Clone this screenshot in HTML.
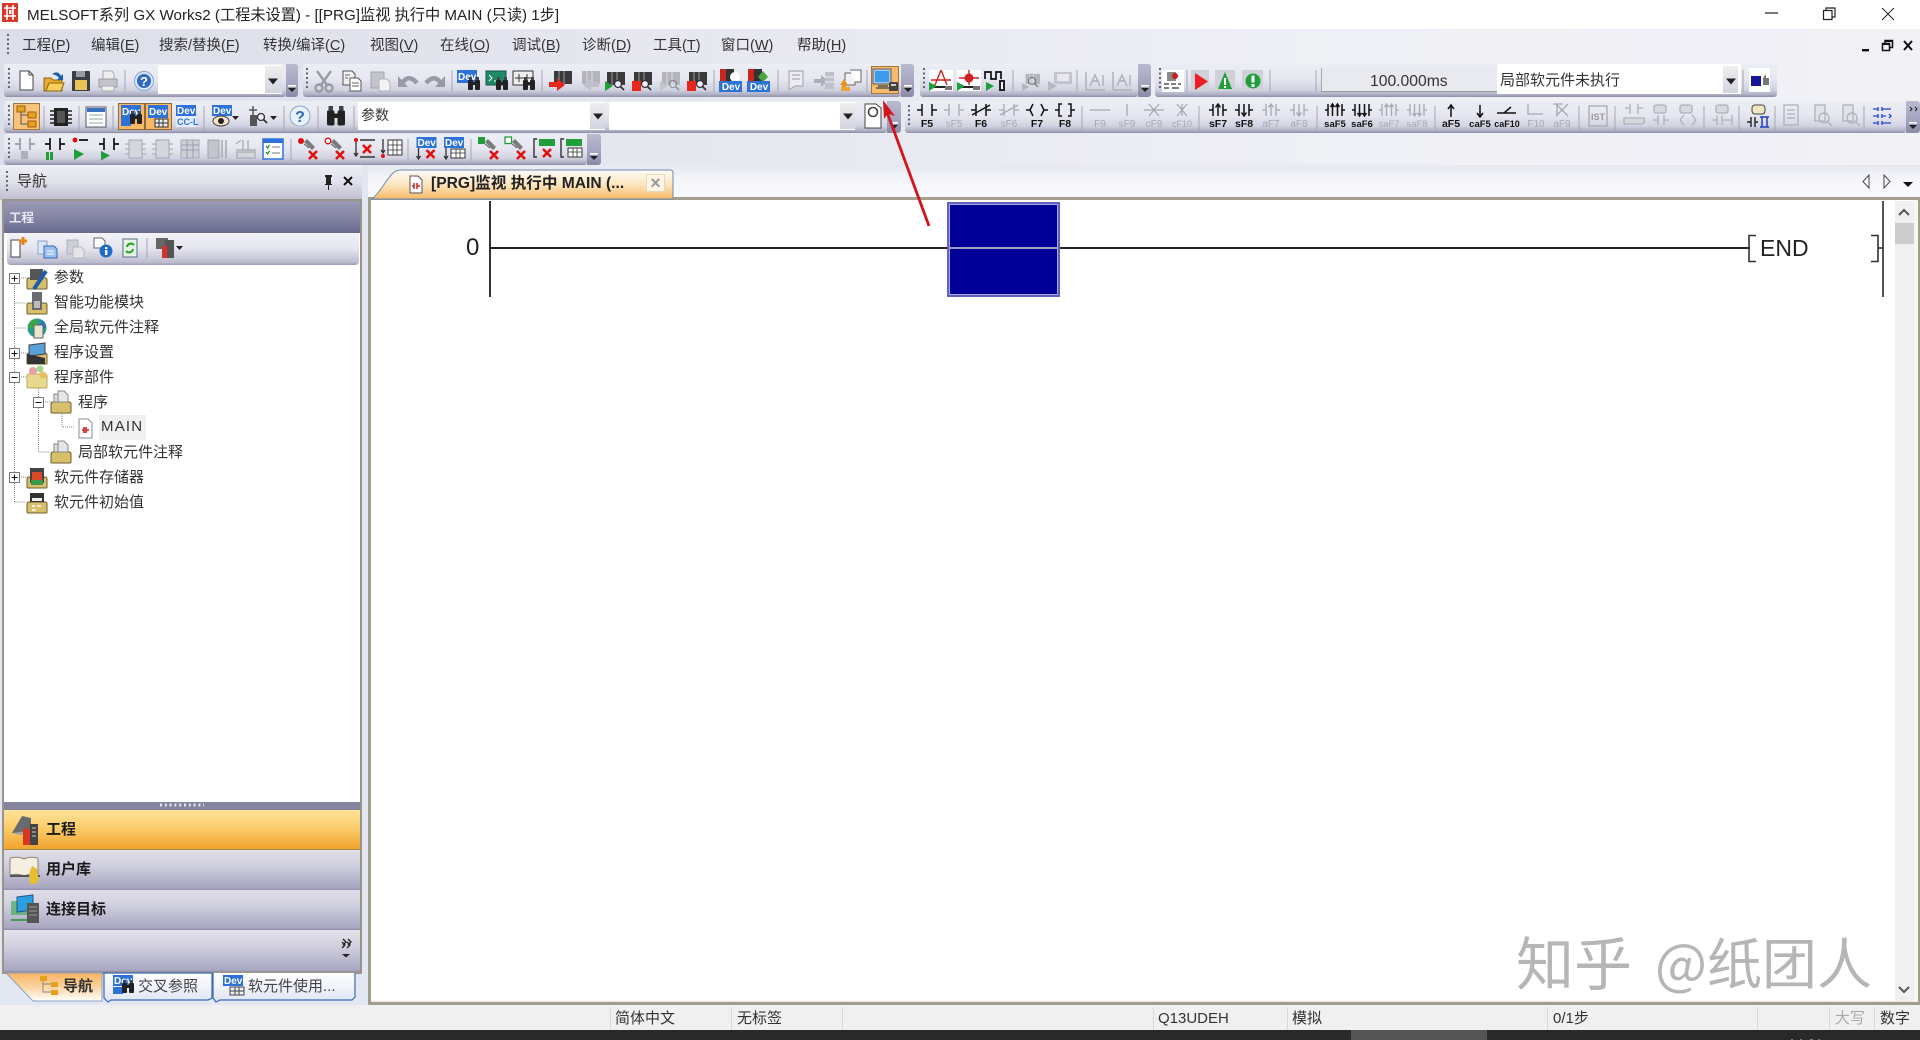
<!DOCTYPE html>
<html lang="zh"><head><meta charset="utf-8"><title>MELSOFT GX Works2</title>
<style>
*{box-sizing:border-box}
html,body{margin:0;padding:0;width:1920px;height:1040px;overflow:hidden;background:#fff}
body{position:relative;font-family:"Liberation Sans","Noto Sans CJK SC",sans-serif;color:#222}
.a{position:absolute}
.t{position:absolute;white-space:nowrap;line-height:20px;height:20px}
.m{font-size:14.5px;top:36px;color:#333}
.m u{text-decoration:underline}
.tb{position:absolute;border-radius:3px;background:linear-gradient(#eceef5,#e6e7f0 45%,#d2d3e2 78%,#aeaec4 93%,#8c8ca6)}
.gp{position:absolute;border-radius:0 3px 3px 0;background:linear-gradient(#b9b9cf,#a4a4c0 60%,#8a8aa6)}
.tree{font-size:15px;color:#333}
.st{font-size:15px;top:1009px;color:#333}
.ss{position:absolute;top:1007px;width:1px;height:23px;background:#d8d8d8}
.bt{font-size:15px;font-weight:bold;left:46px;color:#1a1a1a}
svg text{font-family:"Liberation Sans","Noto Sans CJK SC",sans-serif}
</style></head><body>

<!-- title bar -->
<div class="a" style="left:0;top:0;width:1920px;height:29px;background:#fff"></div>
<div class="t" style="left:27px;top:6px;font-size:15.2px;color:#222">MELSOFT系列 GX Works2 (工程未设置) - [[PRG]监视 执行中 MAIN (只读) 1步]</div>

<!-- chrome bg -->
<div class="a" style="left:0;top:29px;width:1920px;height:141px;background:linear-gradient(90deg,#dcdee9,#e6e7ef 35%,#eff0f5 70%,#f1f1f6)"></div>
<div class="a" style="left:0;top:165px;width:368px;height:840px;background:#e3e7f2"></div>
<div class="a" style="left:368px;top:165px;width:1552px;height:35px;background:linear-gradient(#e6e7f0,#f4f5f9 40%,#fbfbfd)"></div>

<!-- menu -->
<div class="t m" style="left:22px">工程(<u>P</u>)</div>
<div class="t m" style="left:91px">编辑(<u>E</u>)</div>
<div class="t m" style="left:159px">搜索/替换(<u>F</u>)</div>
<div class="t m" style="left:263px">转换/编译(<u>C</u>)</div>
<div class="t m" style="left:370px">视图(<u>V</u>)</div>
<div class="t m" style="left:440px">在线(<u>O</u>)</div>
<div class="t m" style="left:512px">调试(<u>B</u>)</div>
<div class="t m" style="left:582px">诊断(<u>D</u>)</div>
<div class="t m" style="left:653px">工具(<u>T</u>)</div>
<div class="t m" style="left:721px">窗口(<u>W</u>)</div>
<div class="t m" style="left:797px">帮助(<u>H</u>)</div>

<!-- toolbars -->
<div class="tb" style="left:4px;top:64px;width:282px;height:33px"></div><div class="gp" style="left:286px;top:64px;width:12px;height:33px"></div>
<div class="tb" style="left:303px;top:64px;width:598px;height:33px"></div><div class="gp" style="left:901px;top:64px;width:13px;height:33px"></div>
<div class="tb" style="left:920px;top:64px;width:218px;height:33px"></div><div class="gp" style="left:1138px;top:64px;width:13px;height:33px"></div>
<div class="tb" style="left:1155px;top:64px;width:622px;height:33px"></div>
<div class="tb" style="left:4px;top:101px;width:883px;height:32px"></div><div class="gp" style="left:887px;top:101px;width:14px;height:32px"></div>
<div class="tb" style="left:905px;top:101px;width:1001px;height:32px"></div><div class="gp" style="left:1906px;top:101px;width:14px;height:32px"></div>
<div class="tb" style="left:4px;top:134px;width:583px;height:31px"></div><div class="gp" style="left:587px;top:134px;width:14px;height:31px"></div>

<!-- combos -->
<div class="a" style="left:158px;top:65px;width:124px;height:29px;background:#fff"></div>
<div class="a" style="left:265px;top:66px;width:17px;height:27px;background:linear-gradient(#eee,#d4d4e0)"></div>
<div class="a" style="left:358px;top:102px;width:247px;height:28px;background:#fff"></div>
<div class="a" style="left:590px;top:103px;width:15px;height:26px;background:linear-gradient(#eee,#d4d4e0)"></div>
<div class="a" style="left:609px;top:102px;width:246px;height:28px;background:#fff"></div>
<div class="a" style="left:840px;top:103px;width:15px;height:26px;background:linear-gradient(#eee,#d4d4e0)"></div>
<div class="t" style="left:361px;top:105px;font-size:14px;color:#333">参数</div>
<div class="a" style="left:1321px;top:68px;width:176px;height:24px;background:#e9e9f0;border-bottom:1px solid #999;border-left:1px solid #aaa"></div>
<div class="t" style="left:1370px;top:72px;font-size:15.7px;color:#333">100.000ms</div>
<div class="a" style="left:1497px;top:64px;width:244px;height:30px;background:#fff"></div>
<div class="a" style="left:1723px;top:66px;width:15px;height:27px;background:linear-gradient(#eee,#d4d4e0)"></div>
<div class="t" style="left:1500px;top:71px;font-size:15px;color:#333">局部软元件未执行</div>
<div class="a" style="left:1749px;top:68px;width:21px;height:24px;background:#fff"></div>

<!-- highlight buttons -->
<div class="a" style="left:871px;top:66px;width:28px;height:28px;background:#f8bb6c;border:1px solid #a07838"></div>
<div class="a" style="left:13px;top:103px;width:27px;height:27px;background:#f9c27a;border:1px solid #a07838"></div>
<div class="a" style="left:118px;top:103px;width:27px;height:27px;background:#f9b865;border:1px solid #8a6a3a"></div>
<div class="a" style="left:145px;top:103px;width:27px;height:27px;background:#f9b865;border:1px solid #8a6a3a"></div>
<div class="a" style="left:1191px;top:70px;width:18px;height:21px;background:#d0d0d8"></div>
<div class="a" style="left:1215px;top:70px;width:20px;height:21px;background:#d0d0d8"></div>
<div class="a" style="left:1242px;top:70px;width:21px;height:21px;background:#d0d0d8"></div>

<!-- nav pane -->
<div class="a" style="left:0;top:165px;width:362px;height:35px;background:linear-gradient(#eeeff6,#e0e0ea 50%,#bebed0)"></div>
<div class="t" style="left:17px;top:172px;font-size:15px;color:#333">导航</div>
<div class="a" style="left:2px;top:199px;width:360px;height:775px;border:2px solid #9c9488;background:#fff"></div>
<div class="a" style="left:4px;top:201px;width:356px;height:32px;background:linear-gradient(#9a9ab6,#8686a6 50%,#6a6a90)"></div>
<div class="t" style="left:9px;top:208px;font-size:12.5px;color:#e8e8f0;font-weight:bold">工程</div>
<div class="a" style="left:7px;top:233px;width:352px;height:32px;border-radius:0 0 4px 4px;background:linear-gradient(#f2f2f8,#e4e4ee 50%,#bcbcd0 92%,#9a9ab0)"></div>

<div class="t tree" style="left:54px;top:268px">参数</div>
<div class="t tree" style="left:54px;top:293px">智能功能模块</div>
<div class="t tree" style="left:54px;top:318px">全局软元件注释</div>
<div class="t tree" style="left:54px;top:343px">程序设置</div>
<div class="t tree" style="left:54px;top:368px">程序部件</div>
<div class="t tree" style="left:78px;top:393px">程序</div>
<div class="a" style="left:99px;top:415px;width:47px;height:25px;background:#f0f0f0"></div>
<div class="t tree" style="left:101px;top:417px;letter-spacing:1.2px">MAIN</div>
<div class="t tree" style="left:78px;top:443px">局部软元件注释</div>
<div class="t tree" style="left:54px;top:468px">软元件存储器</div>
<div class="t tree" style="left:54px;top:493px">软元件初始值</div>

<!-- splitter & outlook bars -->
<div class="a" style="left:4px;top:802px;width:356px;height:8px;background:#84849e"></div>
<div class="a" style="left:4px;top:810px;width:356px;height:40px;background:linear-gradient(#fde398,#fbcd6c 45%,#f0a42c);border-bottom:1px solid #a88a50"></div>
<div class="a" style="left:4px;top:850px;width:356px;height:40px;background:linear-gradient(#e0dfe9,#cfcede 40%,#a7a5c0 95%,#8e8ca8)"></div>
<div class="a" style="left:4px;top:890px;width:356px;height:40px;background:linear-gradient(#e0dfe9,#cfcede 40%,#a7a5c0 95%,#8e8ca8)"></div>
<div class="a" style="left:4px;top:930px;width:356px;height:42px;background:linear-gradient(#e4e3ec,#d0cfde 40%,#a9a7c2 95%,#92909f)"></div>
<div class="t bt" style="top:820px">工程</div>
<div class="t bt" style="top:860px">用户库</div>
<div class="t bt" style="top:900px">连接目标</div>

<!-- bottom tabs -->
<svg class="a" style="left:0;top:970px" width="368" height="36">
<defs>
<linearGradient id="go" x1="0" y1="0" x2="0" y2="1"><stop offset="0" stop-color="#f9b25e"/><stop offset=".55" stop-color="#fbd8a8"/><stop offset="1" stop-color="#fff"/></linearGradient>
<linearGradient id="gw" x1="0" y1="0" x2="0" y2="1"><stop offset="0" stop-color="#fff"/><stop offset="1" stop-color="#dfe5f5"/></linearGradient>
</defs>
<path d="M6 3L33 31H102L102 3Z" fill="url(#go)" stroke="#8aa0c8"/>
<path d="M104 3V28L108 32L111 30H208L212 28V3Z" fill="url(#gw)" stroke="#3a6ab4" stroke-width="1.2"/>
<path d="M213 3V28L216 32L220 30H352L355 27V3" fill="url(#gw)" stroke="#3a6ab4" stroke-width="1.2"/>
</svg>
<div class="t" style="left:63px;top:977px;font-size:15px;color:#333;font-weight:bold">导航</div>
<div class="t" style="left:138px;top:977px;font-size:15px;color:#444">交叉参照</div>
<div class="t" style="left:248px;top:977px;font-size:15px;color:#444">软元件使用...</div>

<!-- MDI -->
<div class="a" style="left:368px;top:197px;width:1552px;height:809px;background:#a39d8e"></div>
<div class="a" style="left:371px;top:200px;width:1547px;height:802px;background:#fff;border-bottom:1px solid #f4e6d4"></div>
<div class="a" style="left:1895px;top:201px;width:19px;height:800px;background:#f0f0f0"></div>
<div class="a" style="left:1914px;top:200px;width:4px;height:802px;background:#f6f6f6"></div>
<div class="a" style="left:1895px;top:223px;width:19px;height:21px;background:#cdcdcd"></div>
<svg class="a" style="left:368px;top:165px" width="310" height="36">
<defs><linearGradient id="gt" x1="0" y1="0" x2="0" y2="1"><stop offset="0" stop-color="#fbfbf8"/><stop offset=".5" stop-color="#fde6bf"/><stop offset="1" stop-color="#fab867"/></linearGradient></defs>
<path d="M4 34C14 26 20 10 28 6Q30 5 34 5H302Q305 5 305 8V34Z" fill="url(#gt)" stroke="#6a8ab0"/>
</svg>
<div class="t" style="left:431px;top:174px;font-size:15.6px;font-weight:bold;color:#222">[PRG]监视 执行中 MAIN (...</div>
<div class="a" style="left:646px;top:174px;width:19px;height:18px;background:#fdf6e8;border:1px solid #e8d8b8;color:#999;font:bold 18px/16px 'Liberation Sans';text-align:center">×</div>

<!-- ladder -->
<div class="a" style="left:489px;top:201px;width:2px;height:96px;background:#333"></div>
<div class="a" style="left:1882px;top:201px;width:2px;height:96px;background:#555"></div>
<div class="a" style="left:490px;top:247px;width:1260px;height:2px;background:#222"></div>
<div class="a" style="left:947px;top:202px;width:113px;height:95px;background:#000099;border:2px solid #6060c0;box-shadow:inset 0 0 0 1px #a8a8e8"></div>
<div class="a" style="left:949px;top:247px;width:109px;height:2px;background:#a0a0b8"></div>
<div class="t" style="left:466px;top:238px;font-size:24px;color:#222">0</div>
<div class="t" style="left:1760px;top:238px;font-size:23px;color:#222">END</div>
<svg class="a" style="left:1745px;top:230px" width="145" height="36" fill="none" stroke="#333" stroke-width="1.6">
<path d="M11 5.5H4V31.5H11"/><path d="M126 5.5H133V31.5H126"/><path d="M133 18H138"/>
</svg>

<!-- watermark -->
<div class="a" style="left:1516px;top:925px;font:400 58px/70px 'Noto Sans CJK SC',sans-serif;color:#b6b6b6;white-space:nowrap">知乎</div>
<div class="a" style="left:1655px;top:925px;font:400 55px/70px 'Noto Sans CJK SC',sans-serif;color:#b6b6b6;white-space:nowrap">@纸团人</div>

<!-- status -->
<div class="a" style="left:0;top:1005px;width:1920px;height:25px;background:#f0f0f0"></div>
<div class="ss" style="left:610px"></div><div class="ss" style="left:731px"></div><div class="ss" style="left:842px"></div><div class="ss" style="left:1153px"></div><div class="ss" style="left:1287px"></div><div class="ss" style="left:1547px"></div><div class="ss" style="left:1757px"></div><div class="ss" style="left:1829px"></div><div class="ss" style="left:1874px"></div>
<div class="t st" style="left:615px">简体中文</div>
<div class="t st" style="left:737px">无标签</div>
<div class="t st" style="left:1158px">Q13UDEH</div>
<div class="t st" style="left:1292px">模拟</div>
<div class="t st" style="left:1553px">0/1步</div>
<div class="t st" style="left:1835px;color:#aaa">大写</div>
<div class="t st" style="left:1880px">数字</div>
<div class="a" style="left:0;top:1030px;width:1920px;height:10px;background:#292929;overflow:hidden">
 <div class="a" style="left:1351px;top:0;width:136px;height:10px;background:#555"></div>
 <div class="a" style="left:1788px;top:6px;color:#fff;font-size:14px;line-height:16px">14:01</div>
</div>

<!-- icon overlay -->
<svg class="a" style="left:0;top:0" width="1920" height="1040" viewBox="0 0 1920 1040">
<defs>
<g id="gr" fill="#5a5a66"><circle cy="0" r="1.1"/><circle cy="4.5" r="1.1"/><circle cy="9" r="1.1"/><circle cy="13.5" r="1.1"/><circle cy="18" r="1.1"/></g>
<g id="dd"><rect x="-4" y="0" width="8" height="1.6" fill="#fff"/><path d="M-4 3h8l-4 4z" fill="#222"/></g>
<path id="tri" d="M-5-2.5h10l-5 6z" fill="#222"/>
<path id="no" d="M-10 0h5M-5-6v12M5-6v12M5 0h5"/>
<path id="nc" d="M-10 0h5M-5-6v12M5-6v12M5 0h5M-9 5L9-5"/>
<path id="cl" d="M-11 0h4M-4-6L-7 0L-4 6M4-6L7 0L4 6M7 0h4"/>
<path id="in" d="M-10 0h4M-3-6h-3v12h3M3-6h3v12h-3M6 0h4"/>
<path id="up" d="M-9 0h4M-5-6v12M5-6v12M5 0h4M0 6v-11M-2.5-2.5L0-6L2.5-2.5"/>
<path id="dn" d="M-9 0h4M-5-6v12M5-6v12M5 0h4M0-6v11M-2.5 2.5L0 6L2.5 2.5"/>
<path id="up2" d="M-10 0h3M-7-6v12M7-6v12M7 0h3M-2.5 6v-11M2.5 6v-11M-4.5-3L-2.5-6L-.5-3M.5-3L2.5-6L4.5-3"/>
<path id="dn2" d="M-10 0h3M-7-6v12M7-6v12M7 0h3M-2.5-6v11M2.5-6v11M-4.5 3L-2.5 6L-.5 3M.5 3L2.5 6L4.5 3"/>
<g id="bin"><rect x="-6" y="-5" width="5" height="10" rx="1" fill="#222"/><rect x="1" y="-5" width="5" height="10" rx="1" fill="#222"/><rect x="-2" y="-3" width="4" height="3" fill="#222"/><rect x="-5" y="-8" width="3" height="3" fill="#444"/><rect x="2" y="-8" width="3" height="3" fill="#444"/></g>
<g id="mag" fill="none"><circle cx="-1" cy="-1" r="3.5" fill="#eef" stroke="#333" stroke-width="1.3"/><path d="M1.5 1.5L5 5" stroke="#333" stroke-width="1.8"/></g>
<path id="xr" d="M-4-4L4 4M4-4L-4 4" stroke="#e01010" stroke-width="2.6" fill="none"/>
<g id="wr"><path d="M-3-7L-6-4L2 4L5 1z" fill="#7a7a7a"/><path d="M-6-2L-1 2" stroke="#555" stroke-width="1"/></g>
<g id="ggrid"><rect x="-9" y="-9" width="18" height="18" fill="#cfcfd8" stroke="#a8a8b4"/><path d="M-9-4h18M-9 1h18M-3-9v18M3-9v18" stroke="#9e9eac" fill="none"/></g>
<g id="bk"><rect x="-9" y="-9" width="18" height="13" fill="#3a3a3a"/><path d="M-4-9v13M1-9v13" stroke="#999"/></g>
<g id="gk"><rect x="-9" y="-9" width="18" height="13" fill="#b4b4be"/><path d="M-4-9v13M1-9v13" stroke="#ddd"/></g>
<g id="fg"><path d="M-10 9v-8q0-2 2-2h16q2 0 2 2v8q0 1-1 1h-18q-1 0-1-1z" fill="#d8bf6a" stroke="#6e5f2c"/></g>
</defs>

<!-- title logo -->
<rect x="2" y="3" width="16" height="19" fill="#d63a2a"/>
<path d="M4 8h12M4 16h12M7 5v15M13 5v15" stroke="#fff" stroke-width="1.6"/><rect x="9" y="10" width="2.5" height="4" fill="#fff"/>

<!-- window controls -->
<path d="M1765 13h13" stroke="#222" stroke-width="1.2"/>
<path d="M1823.5 10.5h8.5v9h-8.5zM1826 10.5v-2.5h9v9h-3" fill="none" stroke="#222" stroke-width="1.2"/>
<path d="M1882 8l12 12M1894 8l-12 12" stroke="#222" stroke-width="1"/>
<rect x="1862" y="49" width="7" height="2.4" fill="#111"/>
<path d="M1882.5 43.5h7v7h-7zM1885 43.5v-3h7.5v7h-3" fill="none" stroke="#111" stroke-width="1.5"/><rect x="1882.5" y="43" width="7" height="2" fill="#111"/><rect x="1885" y="40" width="7.5" height="2" fill="#111"/>
<path d="M1904 41l8 9M1912 41l-8 9" stroke="#111" stroke-width="2"/>

<!-- grips -->
<use href="#gr" x="8" y="35"/>
<use href="#gr" x="9" y="69"/><use href="#gr" x="307" y="69"/><use href="#gr" x="924" y="69"/><use href="#gr" x="1160" y="69"/>
<use href="#gr" x="9" y="106"/><use href="#gr" x="909" y="106"/><use href="#gr" x="9" y="139"/>
<use href="#dd" x="292" y="85"/><use href="#dd" x="908" y="85"/><use href="#dd" x="1145" y="85"/><use href="#dd" x="894" y="122"/><use href="#dd" x="1913" y="122"/><use href="#dd" x="594" y="153"/>
<path d="M1910 107l2 2-2 2M1915 107l2 2-2 2" fill="none" stroke="#222"/>
<use href="#tri" x="273" y="81"/><use href="#tri" x="598" y="116"/><use href="#tri" x="848" y="116"/><use href="#tri" x="1731" y="81"/>

<!-- separators -->
<path d="M125 70v22M452 70v22M542 70v22M714 70v22M778 70v22M867 70v22M1013 70v22M1077 70v22M1187 70v22M1270 70v22M1316 70v22M1743 70v22M44 106v24M79 106v24M113 106v24M204 106v24M284 106v24M318 106v24M354 106v24M1082 106v24M1199 106v24M1317 106v24M1435 106v24M1579 106v24M1615 106v24M1704 106v24M1739 106v24M1775 106v24M1864 106v24M291 139v22M408 139v22M471 139v22" stroke="#a6a6b4" stroke-width="1"/>

<!-- ROW 1 -->
<path d="M20 71h9l4 4v15H20z" fill="#fff" stroke="#444"/><path d="M29 71v4h4" fill="none" stroke="#444"/>
<g transform="translate(54,81)"><path d="M-10-3h7l2 2h9v11h-18z" fill="#e9a92c" stroke="#8a6414"/><path d="M-8 10l3-8h15l-3 8z" fill="#f7cf5a" stroke="#8a6414"/><path d="M-2-7q6-4 9 2l2-2v6h-6l2-2q-2-3-7-4z" fill="#1c5cab"/></g>
<g transform="translate(81,81)"><rect x="-9" y="-10" width="18" height="20" rx="1" fill="#3c3c44"/><rect x="-6" y="-1" width="12" height="10" fill="#e6c458"/><rect x="-5" y="-10" width="9" height="6" fill="#9a9aa4"/></g>
<g transform="translate(108,81)"><path d="M-5-10h9l2 3v6h-11z" fill="#eee" stroke="#aaa"/><path d="M-9-2h18v8h-18z" fill="#c4c4cc" stroke="#9a9aa4"/><path d="M-6 5h12v5h-12z" fill="#eee" stroke="#aaa"/></g>
<g transform="translate(144,81)"><circle r="9.5" fill="#dbe6f7" stroke="#8aa6d0"/><circle r="7" fill="#2f6ac0"/><text y="5" text-anchor="middle" font-size="13" font-weight="bold" fill="#fff">?</text></g>
<g transform="translate(324,81)" fill="none" stroke="#9a9aa4" stroke-width="2.4"><circle cx="-5" cy="7" r="3.5"/><circle cx="5" cy="7" r="3.5"/><path d="M-3 4L7-10M3 4L-7-10"/></g>
<g transform="translate(352,81)"><path d="M-9-10h9l3 3v11H-9z" fill="#f0f0f0" stroke="#555"/><path d="M-2-3h8l3 3v10H-2z" fill="#fff" stroke="#555"/><path d="M0 2h7M0 5h7M-7-6h5M-7-3h3" stroke="#666"/></g>
<g transform="translate(380,81)"><rect x="-9" y="-9" width="13" height="16" fill="#c4c4ce" stroke="#a4a4ae"/><path d="M-1-2h8l3 3v9H-1z" fill="#f2f2f5" stroke="#b0b0ba"/></g>
<path d="M403 82q6-8 14 1" fill="none" stroke="#9a9aa6" stroke-width="4.5"/><path d="M398 76v11h10z" fill="#9a9aa6"/>
<path d="M440 82q-6-8-14 1" fill="none" stroke="#9a9aa6" stroke-width="4.5"/><path d="M445 76v11h-10z" fill="#9a9aa6"/>
<g transform="translate(469,81)"><rect x="-12" y="-11" width="20" height="13" fill="#2d72d8"/><text x="-11" y="-1" font-size="10" font-weight="bold" fill="#fff">Dev</text><use href="#bin" x="5" y="4"/></g>
<g transform="translate(497,81)"><rect x="-11" y="-10" width="20" height="14" fill="#1e8a66" stroke="#0c5a40"/><path d="M-8-6l3 3l-3 3M-3 0h4" stroke="#fff" fill="none"/><use href="#bin" x="5" y="4"/></g>
<g transform="translate(524,81)"><rect x="-11" y="-10" width="20" height="14" fill="#eee" stroke="#333"/><path d="M-9-3h16M-5-7v8M3-7v8" stroke="#333" fill="none"/><use href="#bin" x="5" y="4"/></g>
<g transform="translate(560,81)"><use href="#bk" x="3" y="-1"/><path d="M-11 1h8v-4l8 7l-8 6v-4h-8z" fill="#e8261c"/></g>
<g transform="translate(588,81)"><use href="#gk" x="3" y="-1"/><path d="M11 1h-8v-4l-8 7l8 6v-4h8z" fill="#c0c0ca"/></g>
<g transform="translate(615,81)"><use href="#bk" x="1"/><path d="M-10 0l8 5l-8 5z" fill="#1f9e3a"/><use href="#mag" x="4" y="4"/></g>
<g transform="translate(642,81)"><use href="#bk" x="1"/><rect x="-10" y="0" width="9" height="10" fill="#e8261c"/><use href="#mag" x="4" y="4"/></g>
<g transform="translate(670,81)"><use href="#gk" x="1"/><path d="M-10 0l8 5l-8 5z" fill="#c4c4cc"/><use href="#mag" x="4" y="4" opacity=".4"/></g>
<g transform="translate(697,81)"><use href="#bk" x="1"/><rect x="-10" y="0" width="9" height="10" fill="#e8261c"/><use href="#mag" x="4" y="4"/></g>
<g transform="translate(731,81)"><rect x="-11" y="-12" width="14" height="12" fill="#333"/><rect x="-11" y="-12" width="6" height="12" fill="#c8261c"/><circle cx="4" cy="-4" r="5" fill="#fff"/><rect x="-12" y="0" width="23" height="11" fill="#2d72d8"/><text y="9" text-anchor="middle" font-size="10" font-weight="bold" fill="#fff">Dev</text></g>
<g transform="translate(759,81)"><rect x="-11" y="-12" width="14" height="12" fill="#333"/><rect x="-11" y="-12" width="6" height="12" fill="#c8261c"/><path d="M-1-4l5-6l5 6l-5 5z" fill="#4aa83a"/><rect x="-12" y="0" width="23" height="11" fill="#2d72d8"/><text y="9" text-anchor="middle" font-size="10" font-weight="bold" fill="#fff">Dev</text></g>
<g transform="translate(797,81)" fill="none" stroke="#b4b4be" stroke-width="1.4"><path d="M-8-10h14v15h-8l-6 4z" fill="#ececf2"/><path d="M-5-6h8M-5-2h8"/></g>
<g transform="translate(824,81)"><path d="M-10-2h7v-4l7 6l-7 6v-4h-7z" fill="#aeaeb8"/><rect x="1" y="-9" width="9" height="17" fill="#c0c0ca"/><path d="M1-4h9M1 1h9" stroke="#eee"/></g>
<g transform="translate(851,81)"><path d="M-6-8h10v12h-10z" fill="#f2f2f6" stroke="#666"/><path d="M-1-11h11v12h-6" fill="#fff" stroke="#666"/><path d="M-9 10v-6h-2l4-6l4 6h-2v6z" fill="#e8941c"/><path d="M-10 6h9v4h-9z" fill="#f0a430"/></g>
<g transform="translate(885,80)"><rect x="-12" y="-11" width="18" height="15" fill="#a8c8f0" stroke="#5a5a66"/><rect x="-10" y="-9" width="14" height="11" fill="#3c9ae8"/><path d="M-7 6h10M-9 8h14" stroke="#555" stroke-width="1.6"/><rect x="4" y="2" width="9" height="9" rx="1" fill="#444"/><rect x="6" y="4" width="5" height="2" fill="#ccc"/></g>
<!-- group C -->
<g transform="translate(941,81)"><rect x="-12" y="-11" width="24" height="21" fill="#fff"/><path d="M0-11L-6 4M0-11L6 4M-10-1H10" stroke="#d02020" stroke-width="1.4" fill="none"/><path d="M-11 6H11" stroke="#222" stroke-width="2"/><path d="M-12 1l8 4l-8 5z" fill="#1f9e3a"/><rect x="4" y="5" width="7" height="4" fill="#777"/></g>
<g transform="translate(969,81)"><rect x="-12" y="-11" width="24" height="21" fill="#fff"/><circle r="4.5" cy="-3" fill="#d02020"/><path d="M0-11V4M-10-3H10" stroke="#d02020" stroke-width="1.4"/><path d="M-11 6H11" stroke="#222" stroke-width="2"/><path d="M-12 1l8 4l-8 5z" fill="#1f9e3a"/><rect x="4" y="5" width="7" height="4" fill="#777"/></g>
<g transform="translate(996,81)"><path d="M-11-2V-9H-5V-2H0V-9H5V-2" fill="none" stroke="#111" stroke-width="1.7"/><path d="M-10 1l8 4l-8 5z" fill="#1f9e3a"/><rect x="3" y="-1" width="6" height="11" fill="#222"/><rect x="5" y="1" width="2" height="7" fill="#fff"/></g>
<g transform="translate(1032,81)"><use href="#gk" x="1" transform="scale(.8)"/><path d="M-10 2l7 4l-7 4z" fill="#b4b4bc"/><use href="#mag" x="1" y="1" opacity=".45"/></g>
<g transform="translate(1060,81)"><rect x="-6" y="-9" width="18" height="12" fill="#c4c4ce"/><rect x="-3" y="-7" width="12" height="7" fill="#e8e8ee"/><path d="M-12 0l9 5l-9 5z" fill="#b8b8c0"/></g>
<g transform="translate(1095,81)" fill="none" stroke="#aeaeb8" stroke-width="1.4"><path d="M-9 9V-9M-9 9H10"/><path d="M-5 5L0-6L5 5M-3 0H3M8 5V-6"/></g>
<g transform="translate(1122,81)" fill="none" stroke="#aeaeb8" stroke-width="1.4"><path d="M-9 9V-9M-9 9H10"/><path d="M-5 5L0-6L5 5M-3 0H3M8 5V-6"/></g>
<!-- group D -->
<g transform="translate(1173,81)"><rect x="-11" y="-11" width="22" height="22" fill="#fff"/><rect x="-6" y="-9" width="9" height="9" fill="#8a8a8a"/><circle cx="2" cy="-5" r="3" fill="#c82020"/><path d="M-9 3h5M-2 3h5M5 3h3M-9 7h5M-1 7h7" stroke="#333" stroke-width="1.2"/></g>
<path d="M1195 73V90L1208 81.5z" fill="#ee1c24"/>
<path d="M1225 72L1232 89H1218z" fill="#1f9e3a"/><rect x="1224" y="78" width="2" height="7" fill="#fff"/><rect x="1224" y="86" width="2" height="2" fill="#fff"/>
<circle cx="1253" cy="81" r="7.5" fill="#1f9e3a"/><rect x="1251.5" y="75.500" width="3" height="7" fill="#fff"/><rect x="1251.5" y="84" width="3" height="3" fill="#fff"/>
<rect x="1751" y="76" width="10" height="10" fill="#15159a"/><path d="M1763 85v-7l3-4v4h3v7z" fill="#777"/>

<!-- ROW 2 -->
<g transform="translate(26,116)"><rect x="-9" y="-10" width="8" height="6" fill="#e8a020" stroke="#996010"/><rect x="2" y="-4" width="8" height="6" fill="#e8a020" stroke="#996010"/><rect x="2" y="5" width="8" height="6" fill="#e8a020" stroke="#996010"/><path d="M-5-4V8H2M-5-1H2" fill="none" stroke="#555"/></g>
<g transform="translate(61,117)"><rect x="-7" y="-9" width="14" height="18" fill="#222"/><path d="M-11-6h4M-11-2h4M-11 2h4M-11 6h4M7-6h4M7-2h4M7 2h4M7 6h4" stroke="#222" stroke-width="1.6"/><rect x="-4" y="-6" width="8" height="12" fill="#555"/></g>
<g transform="translate(96,117)"><rect x="-10" y="-10" width="20" height="20" fill="#fff" stroke="#556"/><rect x="-9" y="-9" width="18" height="4" fill="#3c6ec0"/><path d="M-7-2h14M-7 2h14M-7 6h14" stroke="#8aa"/></g>
<g transform="translate(131,116)"><rect x="-10" y="-11" width="20" height="13" fill="#2d72d8"/><text x="-9" y="-1" font-size="10" font-weight="bold" fill="#fff">Dev</text><rect x="-10" y="2" width="10" height="8" fill="#2d72d8"/><use href="#bin" x="5" y="3"/></g>
<g transform="translate(158,116)"><rect x="-10" y="-11" width="20" height="13" fill="#2d72d8"/><text x="-9" y="-1" font-size="10" font-weight="bold" fill="#fff">Dev</text><rect x="-3" y="3" width="13" height="8" fill="#eee" stroke="#333"/><path d="M1 3v8M5 3v8M-3 7h13" stroke="#333"/></g>
<g transform="translate(186,116)"><rect x="-10" y="-11" width="20" height="11" fill="#2d72d8"/><text x="-9" y="-2" font-size="10" font-weight="bold" fill="#fff">Dev</text><rect x="-10" y="0" width="20" height="11" fill="#e4eefc"/><text x="-9" y="9" font-size="9" font-weight="bold" fill="#2d72d8">CC-L</text></g>
<g transform="translate(224,116)"><rect x="-12" y="-11" width="20" height="11" fill="#2d72d8"/><text x="-11" y="-2" font-size="10" font-weight="bold" fill="#fff">Dev</text><ellipse cx="-3" cy="5" rx="8" ry="5" fill="#f4e8c8" stroke="#444"/><circle cx="-3" cy="5" r="3" fill="#222"/><path d="M8 0h7l-3.500 4z" fill="#222"/></g>
<g transform="translate(261,116)"><path d="M-8-10v18M-12-6h8" stroke="#555" stroke-width="1.5"/><rect x="-11" y="-1" width="7" height="11" fill="#555"/><use href="#mag" x="1" y="2"/><path d="M9 0h7l-3.500 4z" fill="#222"/></g>
<g transform="translate(300,116)"><circle r="10" fill="#e8f0fa" stroke="#8aa6c8"/><text y="6" text-anchor="middle" font-size="16" font-weight="bold" fill="#2f6ac0">?</text><path d="M-3 9L0 13L3 9z" fill="#bcd"/></g>
<use href="#bin" transform="translate(336,118) scale(1.5)"/>
<g transform="translate(873,116)"><path d="M-8-12h11l5 4v20H-8z" fill="#fff" stroke="#444"/><circle cy="-4" r="4.500" fill="none" stroke="#444" stroke-width="1.6"/></g>

<!-- F keys, row 2 -->
<g fill="none" stroke-width="1.5" stroke="#111">
<use href="#no" x="927" y="110"/><use href="#nc" x="981" y="110"/><use href="#cl" x="1037" y="110"/><use href="#in" x="1065" y="110"/>
<use href="#up" x="1218" y="110"/><use href="#dn" x="1244" y="110"/>
<use href="#up2" x="1335" y="110"/><use href="#dn2" x="1362" y="110"/>
<path d="M1451 105v12M1448 109l3-4l3 4M1480 105v12M1477 113l3 4l3-4M1497 113h7l7-6M1502 113h14"/>
</g>
<g fill="none" stroke-width="1.3" stroke="#a8a8b2">
<use href="#no" x="954" y="110"/><use href="#nc" x="1009" y="110"/>
<path d="M1090 110h20M1127 104v12M1144 110h20M1149 104l10 12M1159 104l-10 12M1182 104v12M1177 104l10 12M1187 104l-10 12M1528 104v10h15"/>
<use href="#up" x="1271" y="110"/><use href="#dn" x="1299" y="110"/>
<use href="#up2" x="1389" y="110"/><use href="#dn2" x="1417" y="110"/>
<path d="M1553 104h10M1557 104v12M1556 116l12-12M1556 104l12 12"/>
<rect x="1589" y="106" width="18" height="20"/>
</g>
<g font-size="10.500" font-weight="bold" fill="#111" text-anchor="middle">
<text x="927" y="127">F5</text><text x="981" y="127">F6</text><text x="1037" y="127">F7</text><text x="1065" y="127">F8</text>
<text x="1218" y="127">sF7</text><text x="1244" y="127">sF8</text>
<text x="1335" y="127" font-size="9.500">saF5</text><text x="1362" y="127" font-size="9.500">saF6</text>
<text x="1451" y="127">aF5</text><text x="1480" y="127" font-size="9.500">caF5</text><text x="1507" y="127" font-size="9">caF10</text>
</g>
<g font-size="10" fill="#a8a8b2" text-anchor="middle">
<text x="954" y="127">sF5</text><text x="1009" y="127">sF6</text><text x="1100" y="127">F9</text><text x="1127" y="127">sF9</text><text x="1154" y="127">cF9</text><text x="1182" y="127" font-size="9">cF10</text>
<text x="1271" y="127">aF7</text><text x="1299" y="127">aF8</text><text x="1389" y="127" font-size="9.500">saF7</text><text x="1417" y="127" font-size="9.500">saF8</text>
<text x="1536" y="127">F10</text><text x="1562" y="127">aF9</text>
<text x="1598" y="120" font-size="9" font-weight="bold" fill="#999">IST</text>
</g>
<!-- grey right-side row 2 -->
<g fill="none" stroke="#b0b0ba" stroke-width="1.3">
<path d="M1625 108h5M1630 104v10M1638 104v10M1638 108h5"/><path d="M1624 118h20q2 6-4 6h-16z" fill="#d8d8e0"/>
<rect x="1654" y="105" width="12" height="8" rx="2" fill="#d8d8e0"/><path d="M1653 120h5M1658 115v10M1664 115v10M1664 120h5"/>
<rect x="1680" y="105" width="12" height="8" rx="2" fill="#d8d8e0"/><path d="M1680 120l4-5M1680 120l4 5M1696 120l-4-5M1696 120l-4 5"/>
<rect x="1716" y="105" width="12" height="8" rx="2" fill="#d8d8e0"/><path d="M1712 120h5M1717 115v10M1722 120h10M1722 115v10M1732 115v10"/>
<path d="M1784 105h14v20h-14zM1787 110h8M1787 114h8M1787 118h8"/>
<path d="M1815 105h10v16h-10z" fill="#e2e2ea"/><circle cx="1824" cy="118" r="5"/><path d="M1828 122l4 4"/>
<path d="M1843 105h10v16h-10z" fill="#e2e2ea"/><circle cx="1852" cy="118" r="5"/><path d="M1856 122l4 4"/>
</g>
<g transform="translate(1758,116)" fill="none"><rect x="-6" y="-11" width="13" height="9" rx="3" fill="#f0e6c0" stroke="#444"/><path d="M-11 6h4M-7 1v10M-3 1v10M-3 6h3" stroke="#222" stroke-width="1.4"/><path d="M2 1h9M2 11h9M4 1v10M9 1v10" stroke="#1c3ec0" stroke-width="1.5"/></g>
<g transform="translate(1882,116)" fill="none" stroke="#2040d8" stroke-width="1.3"><path d="M-9-7h5M-4-9v4M0-9v4M0-7h9M-9 0h5M-4-2v4M0-2v4M0 0h4M7-2l2 2-2 2M-9 7h5M-4 5v4M0 5v4M0 7h9"/></g>

<!-- ROW 3 -->
<g transform="translate(0,1)">
<g fill="none" stroke="#9a9aa6" stroke-width="1.700"><use href="#no" x="25" y="143"/></g><rect x="21" y="150" width="7" height="8" fill="#b0b0ba"/>
<g fill="none" stroke="#111" stroke-width="1.700"><use href="#no" x="55" y="143"/></g><rect x="46" y="151" width="3" height="8" fill="#1f9e3a"/><rect x="50" y="151" width="3" height="8" fill="#1f9e3a"/>
<g transform="translate(80,148)"><circle cx="-5" cy="-9" r="2.500" fill="#e01010"/><path d="M-1-9h9" stroke="#111" stroke-width="1.800"/><path d="M-6 0l10 5l-10 6z" fill="#1f9e3a"/></g>
<g transform="translate(109,148)"><g fill="none" stroke="#111" stroke-width="1.700"><use href="#no" y="-5"/></g><path d="M-8 2l9 4.500l-9 5z" fill="#1f9e3a"/></g>
<g transform="translate(135,148)" fill="#d6d6de" stroke="#a4a4ae"><rect x="-6" y="-9" width="13" height="18"/><path d="M-10-5h4M-10 0h4M-10 5h4M7-5h4M7 0h4M7 5h4" fill="none"/></g>
<g transform="translate(162,148)" fill="#d6d6de" stroke="#a4a4ae"><rect x="-6" y="-9" width="13" height="18"/><path d="M-10-5h4M-10 0h4M-10 5h4M7-5h4M7 0h4M7 5h4" fill="none"/></g>
<use href="#ggrid" x="190" y="148"/>
<g transform="translate(217,148)"><rect x="-9" y="-9" width="11" height="18" fill="#c4c4ce" stroke="#a4a4ae"/><path d="M5-9v18M9-9v18" stroke="#a4a4ae" stroke-width="1.500"/></g>
<g transform="translate(245,148)" fill="none" stroke="#aeaeb8" stroke-width="1.400"><path d="M-9-5l5-4M-2-9v10M3-9v10M-9 1h20"/><rect x="-8" y="3" width="18" height="6" fill="#d4d4dc"/></g>
<g transform="translate(273,148)"><rect x="-10" y="-10" width="20" height="20" fill="#fff" stroke="#2d72d8" stroke-width="1.500"/><rect x="-10" y="-10" width="20" height="4" fill="#2d72d8"/><path d="M-7-3l1.500 2 2-3M-7 3l1.500 2 2-3" stroke="#2a8a30" fill="none" stroke-width="1.300"/><path d="M-1-2h8M-1 4h8" stroke="#777"/></g>
<g transform="translate(308,147)"><circle cx="-7" cy="-7" r="3" fill="#e01010"/><use href="#wr" x="2" y="-2"/><use href="#xr" x="5" y="7"/></g>
<g transform="translate(335,147)"><circle cx="-7" cy="-7" r="2.800" fill="#fff" stroke="#e01010" stroke-width="1.300"/><use href="#wr" x="2" y="-2"/><use href="#xr" x="5" y="7"/></g>
<g transform="translate(364,147)"><circle cx="-8" cy="-8" r="2" fill="#e01010"/><path d="M-8-6V8M-10 5l2 3 2-3" stroke="#333" fill="none" stroke-width="1.300"/><path d="M-4-8h15M-4 9h15" stroke="#333" stroke-width="1.600"/><use href="#xr" x="3" y="1"/></g>
<g transform="translate(391,147)"><circle cx="-8" cy="8" r="2" fill="#e01010"/><path d="M-8-9V5M-10 2l2 3 2-3" stroke="#333" fill="none" stroke-width="1.300"/><rect x="-3" y="-8" width="14" height="15" fill="#fff" stroke="#333"/><path d="M-3-3h14M-3 2h14M2-8v15M6-8v15" stroke="#333" stroke-width=".8"/></g>
<g transform="translate(426.500,147)"><rect x="-10" y="-11" width="20" height="11" fill="#2d72d8"/><text x="-9" y="-2" font-size="10" font-weight="bold" fill="#fff">Dev</text><path d="M-8 0V11M-10 8l2 3 2-3" stroke="#333" fill="none" stroke-width="1.300"/><use href="#xr" x="4" y="6"/></g>
<g transform="translate(454,147)"><rect x="-10" y="-11" width="20" height="11" fill="#2d72d8"/><text x="-9" y="-2" font-size="10" font-weight="bold" fill="#fff">Dev</text><path d="M-8 0V11M-10 8l2 3 2-3" stroke="#333" fill="none" stroke-width="1.300"/><rect x="-3" y="1" width="14" height="9" fill="#fff" stroke="#333"/><path d="M-3 5h14M2 1v9M6 1v9" stroke="#333" stroke-width=".8"/></g>
<g transform="translate(489,147)"><rect x="-11" y="-11" width="7" height="7" fill="#1f9e3a"/><use href="#wr" x="2" y="-2"/><use href="#xr" x="5" y="7"/></g>
<g transform="translate(516,147)"><rect x="-11" y="-11" width="6.500" height="6.500" fill="#fff" stroke="#1f9e3a" stroke-width="1.300"/><use href="#wr" x="2" y="-2"/><use href="#xr" x="5" y="7"/></g>
<g transform="translate(544,147)"><path d="M-7-9h-3v18h3" stroke="#333" fill="none" stroke-width="1.400"/><rect x="-5" y="-9" width="16" height="7" fill="#1f9e3a"/><use href="#xr" x="3" y="5"/></g>
<g transform="translate(571,147)"><path d="M-7-9h-3v18h3" stroke="#333" fill="none" stroke-width="1.400"/><rect x="-5" y="-9" width="16" height="7" fill="#1f9e3a"/><rect x="-3" y="0" width="14" height="9" fill="#fff" stroke="#333"/><path d="M-3 4h14M2 0v9M6 0v9" stroke="#333" stroke-width=".8"/></g>
</g>

<!-- nav title buttons -->
<use href="#gr" x="7" y="172"/>
<path d="M325 175h7v2h-1v7h1v1h-3v5h-1v-5h-3v-1h1v-7h-1z" fill="#222"/>
<path d="M344 177l8 8M352 177l-8 8" stroke="#111" stroke-width="2"/>

<!-- nav toolbar icons -->
<g transform="translate(17,248)"><path d="M-6-8h9v17H-6z" fill="#fff" stroke="#444"/><path d="M6-11v8M2-7h8" stroke="#e8841c" stroke-width="3"/></g>
<g transform="translate(47,249)"><path d="M-9-8h9v13H-9z" fill="#dbe6f7" stroke="#8aa6d0"/><path d="M-3-3h10l3 3v9H-3z" fill="#9cc0ee" stroke="#3a6ab4"/><path d="M0 2h7M0 5h7" stroke="#fff"/></g>
<g transform="translate(75,249)"><rect x="-8" y="-9" width="11" height="14" fill="#cfcfd8" stroke="#b0b0ba"/><path d="M-2-2h8l3 3v8H-2z" fill="#e4e4ea" stroke="#b8b8c0"/></g>
<g transform="translate(103,248)"><path d="M-9-10h8l3 3v7H-9z" fill="#fff" stroke="#666"/><circle cx="3" cy="3" r="6.500" fill="#1e6cc8"/><rect x="2" y="2" width="2.400" height="5" fill="#fff"/><rect x="2" y="-1" width="2.400" height="2" fill="#fff"/></g>
<g transform="translate(130,248)"><rect x="-7" y="-9" width="14" height="18" fill="#e4f2e4" stroke="#56708a"/><path d="M-3-1a4 4 0 0 1 7-2M3 1a4 4 0 0 1-7 2" stroke="#28a028" stroke-width="2" fill="none"/></g>
<path d="M147 238v20" stroke="#a6a6b4"/>
<g transform="translate(168,248)"><rect x="-12" y="-10" width="12" height="11" fill="#666"/><rect x="-3" y="-8" width="9" height="18" fill="#555"/><rect x="-6" y="-2" width="5" height="12" fill="#d8302a"/><path d="M8-2h7l-3.500 4z" fill="#222"/></g>

<!-- tree lines -->
<g stroke="#888" stroke-width="1" stroke-dasharray="1 1" fill="none">
<path d="M14.500 283V503M19 278h7M14.500 303h11M14.500 328h11M19 353h7M19 377h7M38.500 382V452M43 402h7M38.500 452h12M62 408V427H74M19 477h7M14.500 502h11"/>
</g>
<g fill="#fff" stroke="#777"><rect x="9.500" y="273.500" width="10" height="10"/><rect x="9.500" y="348.500" width="10" height="10"/><rect x="9.500" y="372.500" width="10" height="10"/><rect x="33.500" y="397.500" width="10" height="10"/><rect x="9.500" y="472.500" width="10" height="10"/></g>
<path d="M11.500 278.500h6M14.500 275.500v6M11.500 353.500h6M14.500 350.500v6M11.500 377.500h6M35.500 402.500h6M11.500 477.500h6M14.500 474.500v6" stroke="#111"/>

<!-- tree icons -->
<g transform="translate(37,279)"><use href="#fg"/><rect x="-7" y="-10" width="13" height="11" fill="#555"/><path d="M-3 10L9-8" stroke="#1c5cab" stroke-width="4"/></g>
<g transform="translate(37,304)"><use href="#fg"/><rect x="-5" y="-12" width="10" height="18" fill="#6a6a70"/><rect x="-3" y="-3" width="6" height="7" fill="#bbb"/></g>
<g transform="translate(37,329)"><circle cy="-1" r="9.500" fill="#2a9a8a"/><path d="M-9-1a9 9 0 0 1 9-9v9z" fill="#3aa84a"/><path d="M9-1a9 9 0 0 0-4-8l-3 8z" fill="#2a70c8"/><rect x="-3" y="-4" width="9" height="13" fill="#e8e4d0" stroke="#666"/></g>
<g transform="translate(37,354)"><use href="#fg"/><path d="M-8-9l16-2v11l-16 2z" fill="#5aa0d8" stroke="#444"/><path d="M-10 0l18 4v6h-18z" fill="#333"/></g>
<g transform="translate(37,378)"><path d="M-10-2q0-2 2-2h16q2 0 2 2v11q0 1-1 1h-18q-1 0-1-1z" fill="#e8d890" stroke="#b8a860"/><circle cx="-4" cy="-7" r="4" fill="#e8a0a0"/><circle cx="3" cy="-9" r="3.500" fill="#a0d890"/><circle cx="6" cy="-3" r="3.500" fill="#e8c060"/></g>
<g transform="translate(61,403)"><use href="#fg"/><path d="M-7-1V-9h8l4 4v4z" fill="#dcdcdc" stroke="#888"/><path d="M-3-12h6l4 4v7h-10z" fill="#e6e6e6" stroke="#888"/></g>
<g transform="translate(85,428)"><path d="M-6-9h9l4 4v15H-6z" fill="#fff" stroke="#8a8a9a"/><path d="M-3 2h2M-1-1v6M1-1v6M1 2h3" stroke="#d02020" stroke-width="1.600"/></g>
<g transform="translate(61,453)"><use href="#fg"/><path d="M-7-1V-9h8l4 4v4z" fill="#dcdcdc" stroke="#888"/><path d="M-3-12h6l4 4v7h-10z" fill="#e6e6e6" stroke="#888"/></g>
<g transform="translate(37,478)"><use href="#fg"/><rect x="-7" y="-10" width="14" height="15" fill="#444"/><rect x="-5" y="-6" width="10" height="10" fill="#d84a2a"/><rect x="-6" y="2" width="12" height="5" fill="#3a9a4a"/></g>
<g transform="translate(37,503)"><use href="#fg"/><rect x="-7" y="-10" width="14" height="9" fill="#333"/><rect x="-5" y="-5" width="10" height="3" fill="#eee"/><path d="M-5 3h3M0 3h4M-5 7h4" stroke="#fff" stroke-width="1.400"/></g>

<!-- splitter dots -->
<path d="M160 805h44" stroke="#e4e4ec" stroke-width="3" stroke-dasharray="2 2.800"/>
<!-- outlook icons -->
<g transform="translate(25,830)"><path d="M-13 3L-3-14L6-12V3z" fill="#6a6a6e"/><path d="M-13 3l16-2v3l-8 1z" fill="#a4a4a8"/><rect x="-2" y="-1" width="7" height="16" fill="#d8381e"/><rect x="5" y="-6" width="8" height="21" fill="#444"/><path d="M7-2h4M7 2h4M7 6h4" stroke="#ccc"/></g>
<g transform="translate(25,869)"><path d="M-15-11q8-2 14 1q6-3 14-1v17q-8-2-14 1q-6-3-14-1z" fill="#f4efe0" stroke="#8a8478"/><path d="M-15 6h30v2h-30z" fill="#555"/><path d="M7 -3l5 3l2 12l-4 3h-5l-1-10z" fill="#e4c030"/></g>
<g transform="translate(25,909)"><path d="M-14-8h20v14h-20z" fill="#48a860" opacity=".7"/><path d="M-8-12l16-2v15l-16 2z" fill="#2aa0e0" stroke="#1a5a8a"/><rect x="2" y="-6" width="12" height="20" fill="#555"/><path d="M-14 10h16v2h-16z" fill="#3aa050"/><path d="M4-2h8M4 2h8M4 6h8" stroke="#999"/></g>
<path d="M342 942l3 3-3 3M347 942l3 3-3 3M343 939l3 3-3 3M348 939l3 3-3 3" fill="none" stroke="#222" stroke-width="1.300"/><path d="M342 954h8l-4 3.500z" fill="#222"/>

<!-- bottom tab icons -->
<g transform="translate(49,985)"><rect x="-9" y="-9" width="7" height="5" fill="#e8a020"/><rect x="2" y="-3" width="7" height="5" fill="#e8a020"/><rect x="2" y="5" width="7" height="5" fill="#e8a020"/><path d="M-6-4V7H2M-6-1H2" fill="none" stroke="#888"/></g>
<g transform="translate(124,985)"><rect x="-11" y="-10" width="20" height="11" fill="#2d72d8"/><text x="-10" y="-1" font-size="10" font-weight="bold" fill="#fff">Dev</text><rect x="-11" y="2" width="10" height="7" fill="#2d72d8"/><use href="#bin" x="4" y="3"/></g>
<g transform="translate(234,985)"><rect x="-11" y="-10" width="20" height="11" fill="#2d72d8"/><text x="-10" y="-1" font-size="10" font-weight="bold" fill="#fff">Dev</text><rect x="-4" y="2" width="14" height="8" fill="#eee" stroke="#444"/><path d="M1 2v8M5 2v8M-4 6h14" stroke="#444"/></g>

<!-- document tab icon -->
<g transform="translate(416,184)"><path d="M-6-8h8l4 4v13H-6z" fill="#fff" stroke="#555"/><path d="M-4 2h2M-2-1v6M1-1v6M1 2h3" stroke="#d02020" stroke-width="1.500"/></g>

<!-- doc nav arrows -->
<path d="M1869 175v13l-6-6.500z" fill="#fff" stroke="#444"/><path d="M1884 175v13l6-6.500z" fill="#fff" stroke="#444"/><path d="M1903 182h10l-5 5z" fill="#111"/>
<path d="M1899 215l5-5 5 5" fill="none" stroke="#555" stroke-width="2"/><path d="M1899 987l5 5 5-5" fill="none" stroke="#555" stroke-width="2"/>

<!-- annotation arrow -->
<path d="M929 226L887 112" stroke="#d2141c" stroke-width="2.800" fill="none"/>
<path d="M883 100L895 116L888 113.500L884 119z" fill="#d2141c"/>
</svg>
</body></html>
